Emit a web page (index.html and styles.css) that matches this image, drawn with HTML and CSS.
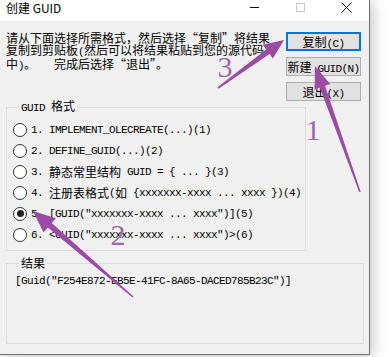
FILE: index.html
```html
<!DOCTYPE html>
<html lang="zh-CN">
<head>
  <meta charset="UTF-8" />
  <title>创建 GUID</title>
  <link rel="stylesheet" href="styles.css">
</head>
<body>

  <div class="window">
    <div class="titlebar">
      <span class="title">创建 GUID</span>
      <div class="caption">
        <span class="cap"><i class="min"></i></span>
        <span class="cap"><i class="max"></i></span>
        <span class="cap">
          <svg width="11" height="11" viewBox="0 0 11 11">
            <path d="M0.5 0.5 L10.5 10.5 M10.5 0.5 L0.5 10.5" stroke="#111" stroke-width="1" fill="none"/>
          </svg>
        </span>
      </div>
    </div>

    <div class="content">
      <div class="top">
        <p class="intro">请从下面选择所需格式，然后选择“复制”将结果<br>复制到剪贴板<span class="a">(</span>然后可以将结果粘贴到您的源代码<br>中<span class="a">)</span>。<span class="a">   </span>完成后选择“退出”。</p>
        <div class="buttons">
          <button class="btn focused">复制<span class="a">(C)</span></button>
          <button class="btn">新建<span class="a"> GUID(N)</span></button>
          <button class="btn">退出<span class="a">(X)</span></button>
        </div>
      </div>

      <!-- 格式选择 -->
      <fieldset class="group formats">
        <legend><span class="a">GUID </span>格式</legend>
        <label class="option"><span class="radio"></span><span class="a">1. IMPLEMENT_OLECREATE(...)(1)</span></label>
        <label class="option"><span class="radio"></span><span class="a">2. DEFINE_GUID(...)(2)</span></label>
        <label class="option"><span class="radio"></span><span class="a">3. </span>静态常里结构<span class="a"> GUID = { ... }(3)</span></label>
        <label class="option"><span class="radio"></span><span class="a">4. </span>注册表格式<span class="a">(</span>如<span class="a"> {xxxxxxx-xxxx ... xxxx })(4)</span></label>
        <label class="option"><span class="radio checked"></span><span class="a">5. [GUID("xxxxxxx-xxxx ... xxxx")](5)</span></label>
        <label class="option"><span class="radio"></span><span class="a">6. &lt;GUID("xxxxxxx-xxxx ... xxxx")&gt;(6)</span></label>
      </fieldset>

      <!-- 结果 -->
      <fieldset class="group result">
        <legend>结果</legend>
        <div class="result-text a">[Guid("F254E872-EB5E-41FC-8A65-DACED785B23C")]</div>
      </fieldset>
    </div>
  </div>

  <!-- 标注箭头 -->
  <svg class="marks" width="390" height="357" viewBox="0 0 390 357">
    <polygon class="arrow" points="217.5,87.3 266.1,49.6 262.8,44.8 284,40 272.8,58.6 269.5,54 218.5,88.7"/>
    <polygon class="arrow" points="359.3,192.3 319.8,87.6 314.6,89.5 315,66 330.2,83.9 325,85.8 360.7,191.7"/>
    <polygon class="arrow" points="132.5,297.6 47.8,227.6 43.5,232.4 33,211 55.9,218.2 51.7,223 133.5,296.4"/>
    <text class="num" x="225" y="77">3</text>
    <text class="num" x="313" y="140">1</text>
    <text class="num" x="118" y="245">2</text>
  </svg>

</body>
</html>
```

FILE: styles.css
```css
* {
  box-sizing: border-box;
}

body {
  margin: 0;
  width: 390px;
  height: 357px;
  overflow: hidden;
  background: #fff;
  font-family: "Noto Sans CJK SC", sans-serif;
  font-size: 12px;
  line-height: 12px;
  color: #000;
}

.a {
  font-family: "Liberation Mono", "Noto Sans CJK SC", monospace;
  font-size: 11px;
  letter-spacing: -0.6px;
  white-space: pre;
}

.window {
  width: 370px;
  height: 355px;
  background: #f0f0f0;
  border-right: 1px solid #6f6f6f;
  border-bottom: 1px solid #6f6f6f;
  box-shadow: 2px 2px 14px rgba(0, 0, 0, 0.25);
}

.titlebar {
  height: 21px;
  background: #fff;
  display: flex;
  align-items: flex-start;
}

.title {
  padding-left: 6px;
  line-height: 15px;
}

.caption {
  margin-left: auto;
  display: flex;
}

.cap {
  width: 46px;
  height: 14px;
  display: flex;
  align-items: center;
  justify-content: center;
  padding-top: 1px;
}

.cap .min {
  width: 9px;
  height: 1px;
  background: #111;
}

.cap .max {
  width: 9px;
  height: 9px;
  border: 1px solid #c8c8c8;
}

.content {
  padding: 11px 0 0 6px;
}

.top {
  display: flex;
  height: 69px;
}

.intro {
  margin: 0;
  width: 276px;
  line-height: 12px;
}

.buttons {
  margin-left: 4px;
  display: flex;
  flex-direction: column;
  gap: 6px;
}

.btn {
  width: 75px;
  height: 19px;
  padding: 0;
  font: inherit;
  line-height: 17px;
  color: #000;
  background: #e1e1e1;
  border: 1px solid #adadad;
}

.btn.focused {
  border: 2px solid #0078d7;
  line-height: 15px;
}

.group {
  margin: 0;
  min-width: 0;
  border: 1px solid #dcdcdc;
}

.group legend {
  padding: 0 2px;
  margin-left: 6px;
  line-height: 12px;
}

.formats {
  width: 300px;
  margin-top: -1px;
  padding: 5px 0 5px 6px;
}

.option {
  display: flex;
  align-items: center;
  height: 21px;
}

.radio {
  width: 14px;
  height: 14px;
  margin-right: 4px;
  border: 1px solid #333;
  border-radius: 50%;
  background: #fff;
  display: flex;
  align-items: center;
  justify-content: center;
}

.radio.checked::after {
  content: "";
  width: 7px;
  height: 7px;
  border-radius: 50%;
  background: #222;
}

.result {
  width: 358px;
  margin-top: 6px;
  padding: 6px 0 56px 8px;
}

.result legend {
  margin-left: 4px;
}

.result-text {
  height: 12px;
  line-height: 12px;
  display: block;
}

.marks {
  position: absolute;
  top: 0;
  left: 0;
  pointer-events: none;
}

.arrow {
  fill: #9b4aa5;
}

.num {
  fill: #a066ab;
  font-family: "Liberation Serif", serif;
  font-size: 30px;
  text-anchor: middle;
}
```
